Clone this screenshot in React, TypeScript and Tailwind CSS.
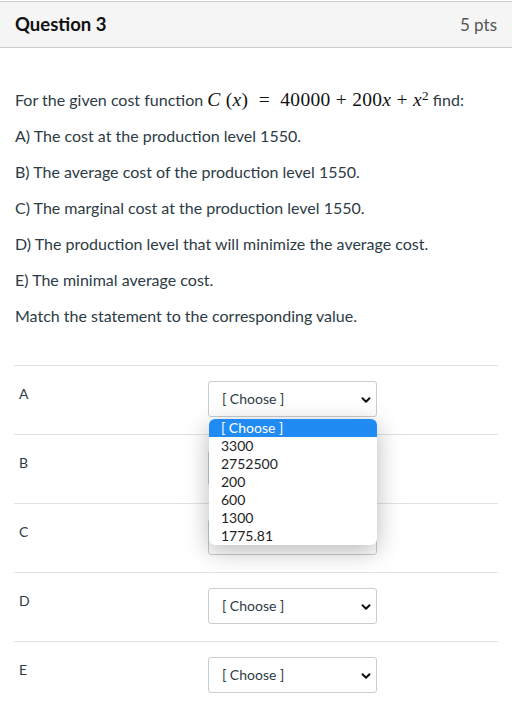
import React from "react";

const OPTIONS = ["3300", "2752500", "200", "600", "1300", "1775.81"];
const ROWS = ["A", "B", "C", "D", "E"];

function Chevron() {
  return (
    <svg width="10" height="10" viewBox="0 0 10 10" className="absolute right-[5px] top-[13px]">
      <path d="M1.5 3.2 L5 6.7 L8.5 3.2" fill="none" stroke="#111" strokeWidth="2" strokeLinecap="round" strokeLinejoin="round" />
    </svg>
  );
}

// covered: the select sits under the open list, so its label is not seen
function FakeSelect({ open, covered }: { open?: boolean; covered?: boolean }) {
  return (
    <div className="relative w-[169px]">
      <div className="relative h-[36px] w-[169px] rounded-[3px] border border-[#c7cdd1] bg-white pl-[13px] text-[14px] leading-[34px] text-[#2d3b45]">
        {covered ? "" : "[ Choose ]"}
        <Chevron />
      </div>
      {open && (
        <div className="absolute left-[1px] top-[38px] z-10 w-[168px] overflow-hidden rounded-[6px] bg-white text-[14px] leading-[18px] text-[#222] shadow-[0_6px_24px_rgba(0,0,0,0.28)]">
          <div className="bg-[#1f8bf3] pl-[12px] text-white">[ Choose ]</div>
          {OPTIONS.map((o) => (
            <div key={o} className="pl-[12px]">
              {o}
            </div>
          ))}
        </div>
      )}
    </div>
  );
}

function Formula() {
  return (
    <span className="font-['Liberation_Serif','DejaVu_Serif',serif] text-[19.5px] leading-[20px] tracking-[0.3px] text-[#111]">
      <i>C</i>&nbsp;(<i>x</i>)&nbsp;&nbsp;=&nbsp;&nbsp;40000&nbsp;+&nbsp;200<i>x</i>&nbsp;+&nbsp;<i>x</i>
      <sup className="text-[13px]">2</sup>
    </span>
  );
}

export default function App() {
  const lines = [
    "A) The cost at the production level 1550.",
    "B) The average cost of the production level 1550.",
    "C) The marginal cost at the production level 1550.",
    "D) The production level that will minimize the average cost.",
    "E) The minimal average cost.",
    "Match the statement to the corresponding value.",
  ];
  return (
    <div className="min-h-[713px] w-[512px] bg-white font-['Lato','Noto_Sans',sans-serif] text-[#2d3b45]">
      <div className="mt-[1px] flex h-[47px] items-center justify-between border-y border-[#c7cdd1] bg-[#f5f5f5] px-[15px]">
        <div className="text-[18.5px] font-bold text-[#111]">Question 3</div>
        <div className="text-[17px] text-[#555]">5 pts</div>
      </div>
      <div className="px-[15px] pt-[41px] text-[16px] leading-[22px] text-[#2d3b45]">
        <p className="mb-[14px]">
          For the given cost function <Formula /> find:
        </p>
        {lines.map((l) => (
          <p key={l} className="mb-[14px]">
            {l}
          </p>
        ))}
      </div>
      <div className="mx-[14px] mt-[38px]">
        {ROWS.map((r, i) => (
          <div key={r} className="flex h-[69px] border-t border-[#dfe2e4] pt-[15px]">
            <div className="w-[194px] pl-[5px] pt-[5px] text-[14px] leading-[16px] text-[#2d3b45]">{r}</div>
            <FakeSelect open={i === 0} covered={i === 1 || i === 2} />
          </div>
        ))}
      </div>
    </div>
  );
}
